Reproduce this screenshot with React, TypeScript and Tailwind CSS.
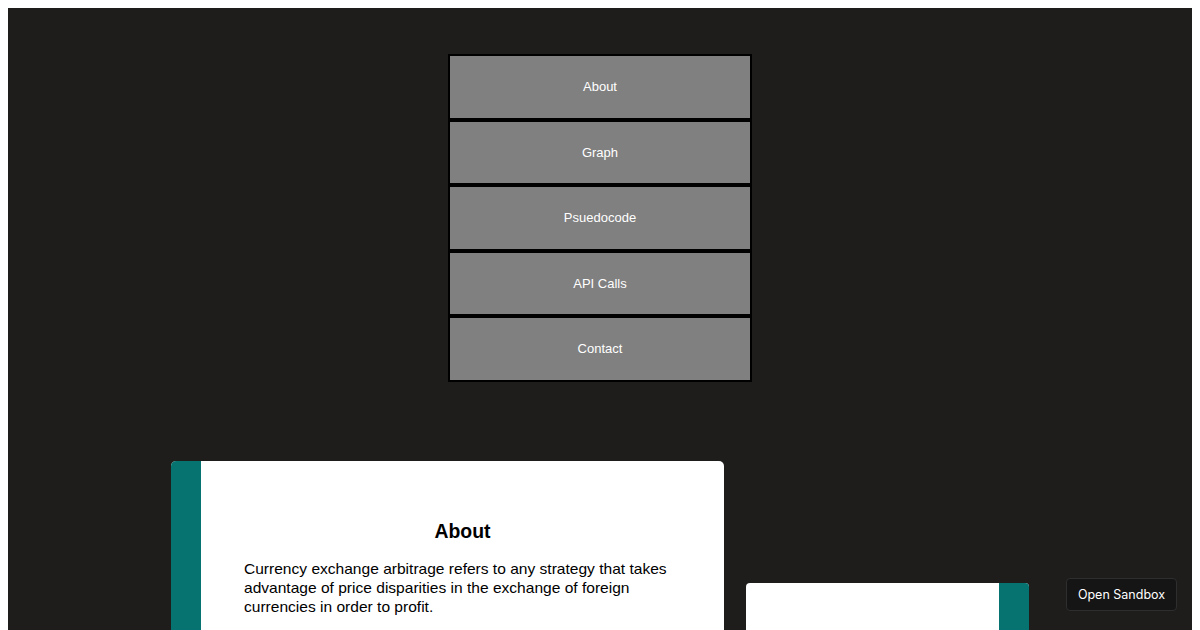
import React from "react";

const navItems = ["About", "Graph", "Psuedocode", "API Calls", "Contact"];

export default function App() {
  return (
    <div className="bg-white p-2 min-h-screen" style={{ fontFamily: '"Liberation Sans", Arial, sans-serif' }}>
      <div className="bg-[#1e1d1b] min-h-[700px] pt-[46px] pb-10">
        <nav className="flex flex-col items-center">
          {navItems.map((item) => (
            <button
              key={item}
              className="w-[304px] h-[65.6px] bg-[#808080] border-2 border-black text-white text-[13px] flex items-center justify-center"
              style={{ fontFamily: '"Liberation Sans", Arial, sans-serif' }}
            >
              {item}
            </button>
          ))}
        </nav>

        <div className="flex justify-center items-start gap-[22px] mt-[79px]">
          <div className="w-[553px] h-[260px] bg-white rounded-[5px] overflow-hidden flex">
            <div className="w-[30px] bg-[#077370] shrink-0" />
            <div className="flex-1 pt-[56px] px-[43px]">
              <h2 className="text-center text-[19.4px] leading-[28px] font-bold text-black">About</h2>
              <p className="mt-[14px] text-[15.55px] leading-[19px] text-black">
                Currency exchange arbitrage refers to any strategy that takes advantage of price disparities in the exchange of foreign currencies in order to profit.
              </p>
            </div>
          </div>
          <div className="w-[283px] h-[200px] mt-[122px] bg-white rounded-[4px] overflow-hidden flex">
            <div className="flex-1" />
            <div className="w-[30px] bg-[#077370] shrink-0" />
          </div>
        </div>
      </div>

      <button
        className="fixed left-[1066px] top-[578px] w-[111px] h-[33px] pt-[2px] bg-[#151515] border border-[#2e2e2e] rounded-[4px] text-[12.5px] text-white flex items-center justify-center"
        style={{ fontFamily: 'Inter, "Liberation Sans", sans-serif' }}
      >
        Open Sandbox
      </button>
    </div>
  );
}
